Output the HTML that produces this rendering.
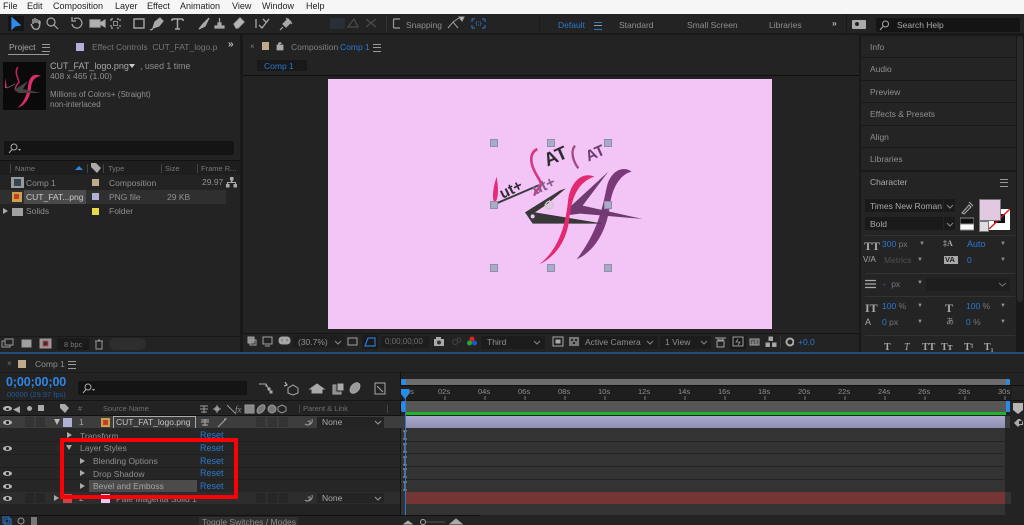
<!DOCTYPE html>
<html><head><meta charset="utf-8"><style>
html,body{margin:0;padding:0;background:#191919;}
#p{position:relative;width:1024px;height:525px;overflow:hidden;background:#191919;font-family:"Liberation Sans",sans-serif;font-size:8.5px;color:#8f8f8f;filter:blur(.35px);}
.b,.t,svg.a{position:absolute;}
.t{line-height:10px;white-space:nowrap;}
.bl{color:#2a78d0;}
.l{color:#a8a8a8;}
.m{position:absolute;width:8px;height:6px;border-top:1px solid #9a9a9a;border-bottom:1px solid #9a9a9a;}
.m:after{content:"";position:absolute;left:0;right:0;top:2px;height:1px;background:#9a9a9a;}
.h{position:absolute;width:6px;height:6px;background:#a9abcb;border:.5px solid #8f90a8;}
.e{position:absolute;width:9px;height:5px;background:#b5b5b5;border-radius:50%;}
.e:after{content:"";position:absolute;left:3px;top:1.5px;width:2.5px;height:2.5px;border-radius:50%;background:#222;}
.r{position:absolute;left:400px;width:604px;height:1px;background:#232323;}
</style></head><body><div id="p">
<div class="b" style="left:0;top:0;width:1024px;height:14px;background:#f6f6f6"></div>
<div class="t" style="left:3px;top:1px;color:#222;font-size:9px">File</div>
<div class="t" style="left:27px;top:1px;color:#222;font-size:9px">Edit</div>
<div class="t" style="left:53px;top:1px;color:#222;font-size:9px">Composition</div>
<div class="t" style="left:115px;top:1px;color:#222;font-size:9px">Layer</div>
<div class="t" style="left:147px;top:1px;color:#222;font-size:9px">Effect</div>
<div class="t" style="left:180px;top:1px;color:#222;font-size:9px">Animation</div>
<div class="t" style="left:232px;top:1px;color:#222;font-size:9px">View</div>
<div class="t" style="left:262px;top:1px;color:#222;font-size:9px">Window</div>
<div class="t" style="left:306px;top:1px;color:#222;font-size:9px">Help</div>

<div class="b" style="left:0;top:14px;width:1024px;height:19px;background:#232323"></div>
<div class="b" style="left:8px;top:16px;width:16px;height:15px;background:#161616"></div>
<svg class="a" style="left:0;top:14px" width="400" height="19" viewBox="0 0 400 19" fill="none" stroke="#a8a8a8" stroke-width="1.2">
<path d="M12 4V15L15 12L20 11Z" fill="#2d8ceb" stroke="#2d8ceb"/>
<path d="M31 10L33 14Q35 16 38 15Q40 13 40 7M33 10V5M35 9V4M37 9V5M39 10V6" stroke-width="1.4"/>
<circle cx="51" cy="8" r="4"/><path d="M54 11L58 15"/>
<path d="M74 5A5 5 0 1 1 72 10M72 3V7H76"/>
<path d="M90 6H100V13H90ZM100 9L105 6V13L100 10" fill="#b0b0b0"/>
<path d="M111 5H114M117 5H120M111 14H114M117 14H120M111 5V8M120 5V8M111 11V14M120 11V14" stroke-dasharray="2 1"/><rect x="113.500" y="7.500" width="4" height="4" stroke-width=".8"/>
<rect x="134" y="5" width="10" height="9" stroke-width="1.4"/>
<path d="M153 14L155 8L160 4L163 7L159 12Z" fill="#a8a8a8"/><path d="M153 15L150 16"/>
<path d="M172 5H183M177.500 5V15M175 15H180M172 5V7M183 5V7" stroke-width="1.5"/>
<path d="M199 15L203 10L209 4L205 12Z" fill="#a8a8a8"/>
<path d="M215 12H224V14H215ZM218 12V9H221V12M219.500 4V9" fill="#a8a8a8"/>
<path d="M234 10L240 4L244 8L238 14H236Z" fill="#b5b5b5"/>
<path d="M256 5V14M259 11L262 14L269 5M263 5L266 8" stroke-width="1.3"/>
<path d="M283 10L288 5L291 8L286 13ZM283 13L280 16M286 4L292 10" fill="#a8a8a8"/>
<path d="M330 4H345V15H330Z" fill="#2a2f36" stroke="none"/>
<path d="M348 13L354 5L358 13ZM366 5L376 13M376 5L366 13" stroke="#4c4c4c"/>
<rect x="393.500" y="5" width="9" height="9" rx="1" stroke="#9a9a9a"/>
</svg>
<div class="b" style="left:386px;top:16px;width:1px;height:15px;background:#353535"></div>
<div class="t" style="left:406px;top:20px">Snapping</div>
<svg class="a" style="left:445px;top:14px" width="45" height="19" fill="none" stroke="#a0a0a0"><path d="M3 14L8 8L13 14M8 8L14 4" /><path d="M14 3L19 3L17 7Z" fill="#bbb"/><path d="M27 5V8M27 5H30M40 5H37M40 5V8M27 14V11M27 14H30M40 14H37M40 14V11" stroke="#2a78d0"/><rect x="31" y="8" width="5" height="3" stroke="#2a78d0" stroke-dasharray="1 1"/></svg>
<div class="b" style="left:539px;top:15px;width:1px;height:17px;background:#1a1a1a"></div>
<div class="t bl" style="left:558px;top:20px">Default</div>
<div class="m" style="left:594px;top:22px;border-color:#2a78d0;background:none"></div>
<div class="t" style="left:619px;top:20px">Standard</div>
<div class="t" style="left:687px;top:20px">Small Screen</div>
<div class="t" style="left:769px;top:20px">Libraries</div>
<div class="t" style="left:832px;top:18px;color:#bbb;font-weight:bold">&raquo;</div>
<div class="b" style="left:846px;top:14px;width:1px;height:19px;background:#1a1a1a"></div>
<div class="b" style="left:852px;top:20px;width:14px;height:9px;background:#aaa;border-radius:1px"></div>
<div class="b" style="left:855px;top:22px;width:4px;height:4px;background:#222;border-radius:50%"></div>
<div class="b" style="left:876px;top:18px;width:144px;height:14px;background:#141414;border-radius:2px"></div>
<svg class="a" style="left:878px;top:18px" width="14" height="14" fill="none" stroke="#aaa"><circle cx="7.500" cy="6" r="3"/><path d="M5 8.500L2 12"/></svg>
<div class="t l" style="left:897px;top:20px">Search Help</div>

<!-- Project panel -->
<div class="b" style="left:0;top:35px;width:240px;height:317px;background:#232323"></div>
<div class="t l" style="left:9px;top:42px">Project</div>
<div class="m" style="left:42px;top:44px"></div>
<div class="b" style="left:8px;top:54px;width:41px;height:1px;background:#9a9a9a"></div>
<div class="b" style="left:76px;top:43px;width:8px;height:8px;background:#b0afd6"></div>
<div class="t" style="left:92px;top:42px;color:#777">Effect Controls&nbsp; CUT_FAT_logo.p</div>
<div class="t" style="left:228px;top:40px;color:#bbb;font-weight:bold;font-size:10px">&raquo;</div>
<div class="b" style="left:3px;top:62px;width:43px;height:48px;background:#0a0a0a"></div>
<svg class="a" style="left:3px;top:62px" width="43" height="48" viewBox="0 0 43 48"><path d="M38 14C30 10 26 16 25 24C24 34 20 42 14 46C22 44 27 36 28 26C29 18 32 15 38 14Z" fill="#e12a6b"/><path d="M11 28L25 19L20 27L38 31L16 31Z" fill="#444"/><path d="M15 5C11 10 15 16 16 20C14 22 13 24 12 27" stroke="#c22460" stroke-width="1.500" fill="none"/><path d="M2 16L2 26L4 26Z" fill="#e12a6b"/><path d="M4 26L12 22" stroke="#555"/></svg>
<div class="t l" style="left:50px;top:61px;font-size:9px">CUT_FAT_logo.png</div>
<div class="b" style="left:129px;top:64px;border:3.5px solid transparent;border-top:4px solid #ccc;border-bottom:0"></div>
<div class="t" style="left:140px;top:61px;font-size:8.800px">, used 1 time</div>
<div class="t" style="left:50px;top:71px">408 x 465 (1.00)</div>
<div class="t" style="left:50px;top:90px;font-size:8px">Millions of Colors+ (Straight)</div>
<div class="t" style="left:50px;top:100px;font-size:8px">non-interlaced</div>
<div class="b" style="left:4px;top:141px;width:230px;height:14px;background:#141414;border-radius:2px"></div>
<svg class="a" style="left:7px;top:141px" width="16" height="14" fill="none" stroke="#aaa"><circle cx="7" cy="6" r="3"/><path d="M5 8.500L2 12"/><path d="M11 8H14L12.500 10Z" fill="#aaa" stroke="none"/></svg>
<div class="b" style="left:0;top:160px;width:240px;height:1px;background:#111"></div>
<div class="b" style="left:0;top:161px;width:240px;height:14px;background:#1e1e1e"></div>
<div class="t" style="left:15px;top:164px;font-size:7.500px;color:#777">Name</div>
<div class="b" style="left:75px;top:166px;border:4.5px solid transparent;border-bottom:4px solid #2a8ae0;border-top:0"></div>
<svg class="a" style="left:90px;top:162px" width="12" height="12"><path d="M1 1H6L11 6L7 11L1 5Z" fill="#aaa"/></svg>
<div class="t" style="left:108px;top:164px;font-size:7.500px;color:#777">Type</div>
<div class="t" style="left:165px;top:164px;font-size:7.500px;color:#777">Size</div>
<div class="t" style="left:201px;top:164px;font-size:7.500px;color:#777">Frame R...</div>
<div class="b" style="left:10px;top:164px;width:1px;height:9px;background:#444"></div>
<div class="b" style="left:87px;top:164px;width:1px;height:9px;background:#444"></div>
<div class="b" style="left:103px;top:164px;width:1px;height:9px;background:#444"></div>
<div class="b" style="left:161px;top:164px;width:1px;height:9px;background:#444"></div>
<div class="b" style="left:197px;top:164px;width:1px;height:9px;background:#444"></div>
<div class="b" style="left:11px;top:177px;width:13px;height:11px;background:#999"></div>
<div class="b" style="left:14px;top:179px;width:7px;height:7px;background:#345"></div>
<div class="t" style="left:26px;top:178px">Comp 1</div>
<div class="b" style="left:92px;top:179px;width:7px;height:7px;background:#c0a98a"></div>
<div class="t" style="left:109px;top:178px">Composition</div>
<div class="t" style="left:202px;top:177px">29.97</div>
<svg class="a" style="left:226px;top:177px" width="11" height="11" fill="#aaa"><rect x="4" y="0" width="3.500" height="3.500"/><rect x="0" y="7" width="3.500" height="3.500"/><rect x="7.500" y="7" width="3.500" height="3.500"/><path d="M5 3H6.500V5H10V7H9V6H2V7H1V5H5Z"/></svg>
<div class="b" style="left:0;top:190px;width:226px;height:14px;background:#2f2f2f"></div>
<div class="b" style="left:24px;top:190px;width:62px;height:14px;background:#4a4a4a"></div>
<div class="b" style="left:12px;top:192px;width:10px;height:10px;background:#c9a24a"></div>
<div class="b" style="left:14px;top:194px;width:5px;height:5px;background:#c93a2a"></div>
<div class="t" style="left:26px;top:192px;color:#ccc">CUT_FAT...png</div>
<div class="b" style="left:92px;top:193px;width:7px;height:7px;background:#b0afd6"></div>
<div class="t" style="left:109px;top:192px">PNG file</div>
<div class="t" style="left:167px;top:192px">29 KB</div>
<div class="b" style="left:3px;top:208px;border:3px solid transparent;border-left:5px solid #aaa;border-right:0"></div>
<div class="b" style="left:12px;top:208px;width:11px;height:8px;background:#a0a0a0"></div>
<div class="t" style="left:26px;top:206px">Solids</div>
<div class="b" style="left:92px;top:208px;width:7px;height:7px;background:#e8d84a"></div>
<div class="t" style="left:109px;top:206px">Folder</div>
<div class="b" style="left:0;top:336px;width:240px;height:1px;background:#181818"></div>
<svg class="a" style="left:0;top:337px" width="110" height="14" fill="none" stroke="#9a9a9a"><rect x="2" y="4" width="8" height="6" /><rect x="5" y="2" width="8" height="6" fill="#232323"/><path d="M22 3H31V10H22Z" fill="#a0a0a0"/><rect x="40" y="2" width="11" height="9" fill="#999"/><rect x="43" y="4" width="5" height="5" fill="#333" stroke="#c44"/><path d="M95 4H103M96 4V12H102V4M98 3H100"/></svg>
<div class="b" style="left:57px;top:338px;width:32px;height:12px;background:#1a1a1a;border-radius:2px"></div>
<div class="t" style="left:64px;top:340px;font-size:7.500px;color:#777">8 bpc</div>
<div class="b" style="left:109px;top:338px;width:37px;height:12px;background:#2e2e2e;border-radius:6px"></div>

<!-- Composition panel -->
<div class="b" style="left:243px;top:35px;width:616px;height:317px;background:#232323"></div>
<div class="t" style="left:250px;top:42px;color:#777;font-size:8px">×</div>
<div class="b" style="left:262px;top:42px;width:7px;height:8px;background:#c0a98a"></div>
<svg class="a" style="left:276px;top:41px" width="9" height="10"><path d="M1 4H7V9H1ZM2.500 4V2.500Q4 .5 5.500 2.500" fill="#aaa" stroke="#aaa" stroke-width=".8"/></svg>
<div class="t" style="left:291px;top:42px;color:#808080">Composition</div>
<div class="t bl" style="left:340px;top:42px">Comp 1</div>
<div class="m" style="left:373px;top:44px"></div>
<div class="b" style="left:257px;top:60px;width:50px;height:11px;background:#191919"></div>
<div class="t bl" style="left:264px;top:60.500px">Comp 1</div>
<div class="b" style="left:243px;top:75px;width:616px;height:1px;background:#0e0e0e"></div>
<div class="b" style="left:328px;top:79px;width:444px;height:250px;background:#f3c5f7"></div>

<svg class="a" style="left:460px;top:125px" width="200" height="150" viewBox="0 0 600 450">
<g style="filter:blur(.8px)">
<path d="M110 155C98 190 95 225 104 232C116 225 116 190 110 155Z" fill="#e0307a"/>
<path d="M232 72C212 82 208 105 222 135C232 158 250 175 240 185C232 195 222 205 225 212" fill="none" stroke="#d63a7e" stroke-width="8"/>
<path d="M345 62C330 80 340 110 355 130" fill="none" stroke="#a34a80" stroke-width="7"/>
<path d="M110 235L238 180" stroke="#3c3c3c" stroke-width="6"/>
<text x="128" y="222" font-family="Liberation Sans,sans-serif" font-size="46" font-weight="bold" fill="#332c36" transform="rotate(-26 128 222)">ut+</text>
<text x="262" y="125" font-family="Liberation Sans,sans-serif" font-size="56" font-weight="bold" fill="#2f2a30" transform="rotate(-24 262 125)">AT</text>
<text x="385" y="110" font-family="Liberation Sans,sans-serif" font-size="46" font-weight="bold" fill="#6e3a72" transform="rotate(-24 385 110)">AT</text>
<text x="225" y="210" font-family="Liberation Sans,sans-serif" font-size="46" font-weight="bold" fill="#8a5a90" transform="rotate(-24 225 210)">ut+</text>
<path d="M515 140C490 122 460 135 445 170C432 205 430 300 350 403C402 380 440 320 450 240C456 190 480 148 515 140Z" fill="#7a3a78"/>
<path d="M325 250L445 140L368 242L548 282L360 266L328 270Z" fill="#6f3a70"/>
<path d="M195 262L300 196L318 190L258 240L225 262L430 296L218 296Z" fill="#383838"/>
<circle cx="218" cy="274" r="6" fill="#f3c5f7"/>
<path d="M403 155C370 140 335 165 325 220C318 292 300 370 238 418C292 392 322 340 328 280C335 220 352 172 403 155Z" fill="#e3296f"/>
</g>
<circle cx="268" cy="240" r="11" fill="none" stroke="#c9c9c9" stroke-width="4"/>
<path d="M252 240H284M268 224V256" stroke="#c9c9c9" stroke-width="2"/>
</svg>
<div class="h" style="left:490px;top:139px"></div><div class="h" style="left:547px;top:139px"></div><div class="h" style="left:604px;top:139px"></div>
<div class="h" style="left:490px;top:201px"></div><div class="h" style="left:604px;top:201px"></div>
<div class="h" style="left:490px;top:264px"></div><div class="h" style="left:547px;top:264px"></div><div class="h" style="left:604px;top:264px"></div>

<!-- viewer toolbar -->
<div class="b" style="left:243px;top:333px;width:616px;height:1px;background:#141414"></div>
<div class="b" style="left:293px;top:335px;width:52px;height:13px;background:#1e1e1e"></div>
<div class="t" style="left:298px;top:337px">(30.7%)</div>
<svg class="a" style="left:244px;top:335px" width="115" height="14" fill="none" stroke="#a0a0a0"><rect x="4" y="2" width="6" height="6" fill="#888"/><rect x="6" y="5" width="6" height="5"/><rect x="19" y="2" width="9" height="7"/><path d="M21 11H26"/><rect x="35" y="2" width="11" height="7" rx="3" fill="#aaa"/><circle cx="38" cy="5" r="1" fill="#222"/><circle cx="43" cy="5" r="1" fill="#222"/><path d="M91 6L94 9L97 6" stroke="#888"/><rect x="104" y="3" width="9" height="7"/></svg>
<div class="b" style="left:362px;top:335px;width:16px;height:14px;background:#1a1a1a"></div>
<svg class="a" style="left:362px;top:335px" width="16" height="14" fill="none" stroke="#2a78d0" stroke-width="1.2"><path d="M3 11L6 3H13V11Z"/></svg>
<div class="b" style="left:381px;top:336px;width:48px;height:12px;background:#1d1d1d"></div>
<div class="t" style="left:385px;top:337px;font-size:8px;color:#6f6f6f">0;00;00;00</div>
<svg class="a" style="left:432px;top:335px" width="50" height="14"><rect x="2" y="4" width="10" height="7" fill="#aaa"/><rect x="4" y="2" width="5" height="3" fill="#aaa"/><circle cx="7" cy="7.500" r="2" fill="#333"/><circle cx="23" cy="7" r="2.500" fill="none" stroke="#444"/><circle cx="27" cy="5" r="2" fill="none" stroke="#444"/><circle cx="40" cy="4" r="2.500" fill="#d22"/><circle cx="37.500" cy="8" r="2.500" fill="#2a3"/><circle cx="42.500" cy="8" r="2.500" fill="#25c"/></svg>
<div class="b" style="left:481px;top:336px;width:64px;height:13px;background:#1c1c1c"></div>
<div class="t" style="left:487px;top:337px">Third</div>
<svg class="a" style="left:533px;top:340px" width="8" height="5" fill="none" stroke="#888"><path d="M1 1L4 4L7 1"/></svg>
<svg class="a" style="left:552px;top:335px" width="28" height="14"><rect x="1" y="2" width="10" height="9" fill="none" stroke="#aaa"/><rect x="3.500" y="4.500" width="5" height="4" fill="#aaa"/><rect x="17" y="2" width="10" height="9" fill="#777"/><rect x="19" y="4" width="2" height="2" fill="#222"/><rect x="23" y="4" width="2" height="2" fill="#222"/><rect x="21" y="7" width="2" height="2" fill="#222"/></svg>
<div class="b" style="left:580px;top:336px;width:78px;height:13px;background:#1c1c1c"></div>
<div class="t" style="left:585px;top:337px">Active Camera</div>
<svg class="a" style="left:646px;top:340px" width="8" height="5" fill="none" stroke="#888"><path d="M1 1L4 4L7 1"/></svg>
<div class="b" style="left:660px;top:336px;width:51px;height:13px;background:#1c1c1c"></div>
<div class="t" style="left:665px;top:337px">1 View</div>
<svg class="a" style="left:700px;top:340px" width="8" height="5" fill="none" stroke="#888"><path d="M1 1L4 4L7 1"/></svg>
<div class="b" style="left:730px;top:336px;width:16px;height:13px;background:#191919"></div>
<svg class="a" style="left:714px;top:335px" width="80" height="14" fill="none" stroke="#a0a0a0"><path d="M1 3H12M4 3V5H9V3M3 6H10V12H3Z"/><rect x="19" y="2" width="10" height="9"/><path d="M24 4L22 7H26L24 10" stroke-width=".8"/><path d="M36 10V4H45V10ZM39 10V6M42 10V5" fill="#555"/><rect x="55" y="2" width="3.500" height="3.500" fill="#aaa"/><rect x="52" y="8" width="3.500" height="3.500" fill="#aaa"/><rect x="58.500" y="8" width="3.500" height="3.500" fill="#aaa"/><circle cx="76" cy="7" r="3.500" stroke="#aaa" stroke-width="2"/></svg>
<div class="t bl" style="left:798px;top:337px">+0.0</div>
<div class="b" style="left:780px;top:336px;width:1px;height:12px;background:#383838"></div>

<!-- Right panels -->
<div class="b" style="left:861px;top:36px;width:155px;height:316px;background:#242424"></div>
<div class="b" style="left:1017px;top:36px;width:6px;height:266px;background:#2a2a2a;border-radius:3px"></div>
<div class="t" style="left:870px;top:42px">Info</div>
<div class="t" style="left:870px;top:64px">Audio</div>
<div class="t" style="left:870px;top:87px">Preview</div>
<div class="t" style="left:870px;top:109px">Effects &amp; Presets</div>
<div class="t" style="left:870px;top:132px">Align</div>
<div class="t" style="left:870px;top:154px">Libraries</div>
<div class="b" style="left:861px;top:57px;width:155px;height:1px;background:#191919"></div>
<div class="b" style="left:861px;top:80px;width:155px;height:1px;background:#191919"></div>
<div class="b" style="left:861px;top:102px;width:155px;height:1px;background:#191919"></div>
<div class="b" style="left:861px;top:125px;width:155px;height:1px;background:#191919"></div>
<div class="b" style="left:861px;top:147px;width:155px;height:1px;background:#191919"></div>
<div class="b" style="left:861px;top:170px;width:155px;height:2px;background:#191919"></div>
<div class="t" style="left:870px;top:177px;color:#aaa">Character</div>
<div class="m" style="left:1000px;top:179px"></div>
<div class="b" style="left:865px;top:199px;width:78px;height:13px;background:#1a1a1a"></div>
<div class="b" style="left:944px;top:199px;width:11px;height:13px;background:#1a1a1a"></div>
<div class="t l" style="left:870px;top:201px">Times New Roman</div>
<div class="b" style="left:865px;top:217px;width:78px;height:13px;background:#1a1a1a"></div>
<div class="b" style="left:944px;top:217px;width:11px;height:13px;background:#1a1a1a"></div>
<div class="t l" style="left:870px;top:219px">Bold</div>
<svg class="a" style="left:945px;top:203px" width="10" height="26" fill="none" stroke="#888"><path d="M2 2L5 5L8 2M2 20L5 23L8 20"/></svg>
<svg class="a" style="left:960px;top:199px" width="14" height="32" fill="none" stroke="#aaa"><path d="M2 14L9 6L11 8L4 15ZM9 3L13 7" fill="#333"/><rect x="0" y="19" width="14" height="12" fill="#fff" stroke="#888"/><rect x="0" y="19" width="14" height="6" fill="#111" stroke="#888"/></svg>
<div class="b" style="left:989px;top:209px;width:21px;height:21px;background:#fff"></div>
<div class="b" style="left:994px;top:214px;width:11px;height:9px;background:#111"></div>
<svg class="a" style="left:979px;top:199px" width="32" height="32"><path d="M10 30L31 10" stroke="#e01010" stroke-width="1.300"/></svg>
<div class="b" style="left:979px;top:199px;width:20px;height:20px;background:#e2c9e2;border:1px solid #777"></div>
<div class="b" style="left:979px;top:221px;width:8px;height:9px;background:#ddd;border:.5px solid #777"></div>
<div class="b" style="left:865px;top:235px;width:150px;height:1px;background:#333"></div>
<div class="b" style="left:865px;top:273px;width:150px;height:1px;background:#333"></div>
<div class="b" style="left:865px;top:296px;width:150px;height:1px;background:#333"></div>
<div class="b" style="left:865px;top:335px;width:150px;height:1px;background:#333"></div>
<div class="t l" style="left:864px;top:239px;font:bold 12px 'Liberation Serif',serif">TT</div>
<div class="t bl" style="left:882px;top:239px">300 <span style="color:#777">px</span></div>
<div class="t" style="left:919px;top:239px;font-size:6px">▼</div>
<div class="t l" style="left:863px;top:255px;font-size:8px">V/A</div>
<div class="t" style="left:884px;top:255px;color:#4e4e4e">Metrics</div>
<div class="t" style="left:917px;top:255px;font-size:6px">▼</div>
<div class="t l" style="left:943px;top:239px;font:bold 8px 'Liberation Serif',serif">‡A</div>
<div class="t bl" style="left:967px;top:239px;font-size:9px">Auto</div>
<div class="t" style="left:1000px;top:239px;font-size:6px">▼</div>
<div class="b" style="left:944px;top:256px;width:14px;height:8px;background:#aaa"></div>
<div class="t" style="left:945px;top:255px;color:#222;font-size:7.500px;font-weight:bold">VA</div>
<div class="t bl" style="left:967px;top:255px">0</div>
<div class="t" style="left:1000px;top:255px;font-size:6px">▼</div>
<svg class="a" style="left:865px;top:279px" width="12" height="11" fill="none" stroke="#aaa" stroke-width="1.300"><path d="M0 1.500H11M0 5H11M0 8.500H11"/></svg>
<div class="t bl" style="left:883px;top:279px">- <span style="color:#777;margin-left:3px">px</span></div>
<div class="t" style="left:917px;top:278px;font-size:6px">▼</div>
<div class="b" style="left:926px;top:278px;width:84px;height:13px;background:#1e1e1e"></div>
<svg class="a" style="left:998px;top:282px" width="10" height="6" fill="none" stroke="#777"><path d="M1 1L4.500 4L8 1"/></svg>
<div class="t l" style="left:865px;top:301px;font:bold 12px 'Liberation Serif',serif">IT</div>
<div class="t bl" style="left:882px;top:301px">100 <span style="color:#777">%</span></div>
<div class="t" style="left:917px;top:301px;font-size:6px">▼</div>
<div class="t l" style="left:945px;top:301px;font:bold 12px 'Liberation Serif',serif">T</div>
<div class="t bl" style="left:966px;top:301px">100 <span style="color:#777">%</span></div>
<div class="t" style="left:1000px;top:301px;font-size:6px">▼</div>
<div class="t l" style="left:865px;top:317px;font-size:9px">A</div>
<div class="t bl" style="left:882px;top:317px">0 <span style="color:#777">px</span></div>
<div class="t" style="left:917px;top:317px;font-size:6px">▼</div>
<div class="t" style="left:946px;top:317px;color:#999;font-size:8px;font-family:'Liberation Sans','Noto Sans CJK JP',sans-serif">あ</div>
<div class="t bl" style="left:966px;top:317px">0 <span style="color:#777">%</span></div>
<div class="t" style="left:1000px;top:317px;font-size:6px">▼</div>
<div class="t l" style="left:884px;top:342px;font:bold 10px 'Liberation Serif',serif">T</div>
<div class="t l" style="left:904px;top:342px;font:italic 10px 'Liberation Serif',serif">T</div>
<div class="t l" style="left:922px;top:342px;font:bold 10px 'Liberation Serif',serif">TT</div>
<div class="t l" style="left:941px;top:342px;font:bold 10px 'Liberation Serif',serif">Tт</div>
<div class="t l" style="left:964px;top:342px;font:bold 10px 'Liberation Serif',serif">T¹</div>
<div class="t l" style="left:984px;top:342px;font:bold 10px 'Liberation Serif',serif">T₁</div>

<!-- blue divider -->
<div class="b" style="left:0;top:352px;width:1024px;height:2px;background:#1e4d80"></div>

<!-- Timeline -->
<div class="b" style="left:0;top:354px;width:1024px;height:171px;background:#232323"></div>
<div class="t" style="left:7px;top:359px;color:#777;font-size:8px">×</div>
<div class="b" style="left:18px;top:360px;width:8px;height:8px;background:#c0a98a"></div>
<div class="t" style="left:35px;top:359px">Comp 1</div>
<div class="m" style="left:68px;top:361px"></div>
<div class="b" style="left:0;top:372px;width:1024px;height:1px;background:#1a1a1a"></div>
<div class="t" style="left:6px;top:377px;color:#2d86e6;font-size:12.500px;font-weight:bold;letter-spacing:-.1px">0;00;00;00</div>
<div class="t" style="left:7px;top:390px;color:#1f5a9c;font-size:7.500px">00000 (29.97 fps)</div>
<div class="b" style="left:78px;top:381px;width:169px;height:14px;background:#141414"></div>
<svg class="a" style="left:81px;top:381px" width="16" height="14" fill="none" stroke="#aaa"><circle cx="7" cy="6" r="3"/><path d="M5 8.500L2 12"/><path d="M11 8H14L12.500 10Z" fill="#aaa" stroke="none"/></svg>
<svg class="a" style="left:258px;top:379px" width="132" height="18" fill="none" stroke="#a8a8a8"><path d="M1 5H8L11 10M8 5V8" /><rect x="10" y="9" width="2" height="2" fill="#aaa"/><rect x="12" y="12" width="2" height="2" fill="#aaa"/><path d="M27 3L29 6L26 7" stroke="#ccc"/><path d="M30 9L35 6L40 9V14L35 16L30 14Z"/><path d="M52 10L59 5L66 10H52ZM54 10V14H64V10" fill="#aaa"/><rect x="75" y="6" width="8" height="9" fill="#888"/><rect x="79" y="4" width="7" height="8" fill="#aaa" stroke="#232323"/><ellipse cx="97" cy="9" rx="4" ry="6" transform="rotate(40 97 9)" fill="#999"/><path d="M117 4H127V15H117ZM119 7L125 13" /></svg>
<div class="b" style="left:0;top:400px;width:400px;height:1px;background:#141414"></div>
<div class="e" style="left:3px;top:406px"></div>
<div class="t" style="left:13px;top:404px;color:#aaa;font-size:9px">◀</div>
<div class="b" style="left:27px;top:406px;width:5px;height:5px;background:#aaa;border-radius:50%"></div>
<div class="b" style="left:38px;top:405px;width:6px;height:6px;background:#aaa"></div>
<svg class="a" style="left:59px;top:403px" width="11" height="11"><path d="M1 1H6L10 5L6 10L1 5Z" fill="#aaa"/></svg>
<div class="t" style="left:78px;top:404px;font-size:7.500px;color:#6f6f6f">#</div>
<div class="t" style="left:103px;top:404px;font-size:7.500px;color:#6f6f6f">Source Name</div>
<svg class="a" style="left:198px;top:403px" width="92" height="12" fill="none" stroke="#999"><path d="M2 3H10M2 6H10M6 3V10M3 9H9"/><circle cx="19" cy="6" r="2" fill="#999"/><path d="M19 2V10M15 6H23"/><path d="M29 2L37 10"/><text x="37" y="9.500" font-family="Liberation Serif,serif" font-style="italic" font-size="9" fill="#999" stroke="none">fx</text><rect x="47" y="2" width="9" height="8" fill="#888"/><ellipse cx="63" cy="6" rx="3" ry="5" transform="rotate(40 63 6)" fill="#777"/><circle cx="74" cy="6" r="4" fill="#777"/><path d="M84 2L88 4V8L84 10L80 8V4Z"/></svg>
<div class="t" style="left:303px;top:404px;font-size:7.500px;color:#6f6f6f">Parent &amp; Link</div>
<div class="b" style="left:299px;top:405px;width:1px;height:8px;background:#444"></div>
<div class="b" style="left:387px;top:405px;width:1px;height:8px;background:#444"></div>
<div class="b" style="left:0;top:415px;width:400px;height:1px;background:#111"></div>

<!-- Layer rows left -->
<div class="b" style="left:0;top:416px;width:400px;height:12px;background:#3d3d3d"></div>
<div class="e" style="left:3px;top:419.500px"></div>
<div class="b" style="left:25px;top:417px;width:9px;height:10px;background:#333"></div>
<div class="b" style="left:36px;top:417px;width:9px;height:10px;background:#333"></div>
<div class="b" style="left:54px;top:419px;border:3.500px solid transparent;border-top:6px solid #bbb;border-bottom:0"></div>
<div class="b" style="left:63px;top:418px;width:9px;height:9px;background:#b0afd6"></div>
<div class="t l" style="left:79px;top:417px">1</div>
<div class="b" style="left:101px;top:418px;width:9px;height:9px;background:#c9a24a"></div>
<div class="b" style="left:103px;top:420px;width:5px;height:5px;background:#c93a2a"></div>
<div class="b" style="left:113px;top:416px;width:81px;height:11px;border:1px solid #aaa;background:#3a3a3a"></div>
<div class="t" style="left:116px;top:417px;color:#c4c4c4">CUT_FAT_logo.png</div>
<svg class="a" style="left:199px;top:416px" width="30" height="12" fill="none" stroke="#aaa"><path d="M2 4H10M2 6H10M6 3V10M3 9H9"/><path d="M25 3L27 3L19 11"/></svg>
<div class="b" style="left:256px;top:417px;width:9px;height:10px;background:#333"></div>
<div class="b" style="left:268px;top:417px;width:9px;height:10px;background:#333"></div>
<div class="b" style="left:279px;top:417px;width:9px;height:10px;background:#333"></div>
<svg class="a" style="left:302px;top:416px" width="12" height="12" fill="none" stroke="#999"><path d="M6 6A1.500 1.500 0 0 1 8 5A3 3 0 0 1 3 8A4.500 4.500 0 0 0 10 3"/></svg>
<div class="b" style="left:317px;top:416.500px;width:67px;height:11px;background:#242424"></div>
<div class="t l" style="left:322px;top:417px;font-size:8.500px">None</div>
<svg class="a" style="left:374px;top:420px" width="8" height="5" fill="none" stroke="#999"><path d="M1 1L4 4L7 1"/></svg>

<div class="b" style="left:0;top:428px;width:400px;height:64px;background:#262626"></div>
<div class="b" style="left:0;top:441px;width:400px;height:1px;background:#1f1f1f"></div>
<div class="b" style="left:0;top:454px;width:400px;height:1px;background:#1f1f1f"></div>
<div class="b" style="left:0;top:467px;width:400px;height:1px;background:#1f1f1f"></div>
<div class="b" style="left:0;top:479px;width:400px;height:1px;background:#1f1f1f"></div>
<div class="b" style="left:89px;top:480px;width:108px;height:12px;background:#4b4b4b"></div>

<div class="b" style="left:67px;top:432px;border:3px solid transparent;border-left:5px solid #aaa;border-right:0"></div>
<div class="t" style="left:80px;top:431px">Transform</div>
<div class="t bl" style="left:200px;top:430px;font-size:9px">Reset</div>
<div class="e" style="left:3px;top:445.500px"></div>
<div class="b" style="left:66px;top:445px;border:3px solid transparent;border-top:5px solid #aaa;border-bottom:0"></div>
<div class="t" style="left:80px;top:443px">Layer Styles</div>
<div class="t bl" style="left:200px;top:443px;font-size:9px">Reset</div>
<div class="b" style="left:80px;top:458px;border:3px solid transparent;border-left:5px solid #aaa;border-right:0"></div>
<div class="t" style="left:93px;top:456px">Blending Options</div>
<div class="t bl" style="left:200px;top:456px;font-size:9px">Reset</div>
<div class="e" style="left:3px;top:470.500px"></div>
<div class="b" style="left:80px;top:470px;border:3px solid transparent;border-left:5px solid #aaa;border-right:0"></div>
<div class="t" style="left:93px;top:469px">Drop Shadow</div>
<div class="t bl" style="left:200px;top:468px;font-size:9px">Reset</div>
<div class="e" style="left:3px;top:483.500px"></div>
<div class="b" style="left:80px;top:483px;border:3px solid transparent;border-left:5px solid #aaa;border-right:0"></div>
<div class="t" style="left:93px;top:481px;color:#a5a5a5">Bevel and Emboss</div>
<div class="t bl" style="left:200px;top:481px;font-size:9px">Reset</div>

<div class="b" style="left:0;top:492px;width:400px;height:12px;background:#2d2d2d"></div>
<div class="e" style="left:3px;top:495.500px"></div>
<div class="b" style="left:25px;top:493px;width:9px;height:10px;background:#262626"></div>
<div class="b" style="left:36px;top:493px;width:9px;height:10px;background:#262626"></div>
<div class="b" style="left:54px;top:495px;border:3px solid transparent;border-left:5px solid #aaa;border-right:0"></div>
<div class="b" style="left:63px;top:494px;width:9px;height:9px;background:#c44"></div>
<div class="t l" style="left:79px;top:493px">2</div>
<div class="b" style="left:101px;top:494px;width:9px;height:9px;background:#f3c5f7"></div>
<div class="t" style="left:116px;top:494px">Pale Magenta Solid 1</div>
<svg class="a" style="left:302px;top:492px" width="12" height="12" fill="none" stroke="#999"><path d="M6 6A1.500 1.500 0 0 1 8 5A3 3 0 0 1 3 8A4.500 4.500 0 0 0 10 3"/></svg>
<div class="b" style="left:317px;top:493px;width:67px;height:10px;background:#242424"></div>
<div class="t l" style="left:322px;top:493px;font-size:8.500px">None</div>
<svg class="a" style="left:374px;top:496px" width="8" height="5" fill="none" stroke="#999"><path d="M1 1L4 4L7 1"/></svg>
<div class="b" style="left:256px;top:493px;width:9px;height:10px;background:#262626"></div>
<div class="b" style="left:268px;top:493px;width:9px;height:10px;background:#262626"></div>
<div class="b" style="left:279px;top:493px;width:9px;height:10px;background:#262626"></div>

<!-- Red highlight -->
<div class="b" style="left:60px;top:438px;width:170px;height:53px;border:4px solid #fb0007"></div>

<!-- Timeline bottom -->
<div class="b" style="left:0;top:515px;width:480px;height:1px;background:#111"></div>
<svg class="a" style="left:0;top:516px" width="40" height="9" fill="none" stroke="#2a78d0"><rect x="3" y="1" width="6" height="6"/><rect x="5" y="3" width="6" height="6"/><circle cx="21" cy="5" r="3" stroke="#999"/><rect x="31" y="1" width="6" height="8" fill="#777" stroke="none"/></svg>
<div class="b" style="left:199px;top:517px;width:99px;height:8px;background:#2f2f2f"></div>
<div class="t" style="left:202px;top:517px;font-size:8.500px">Toggle Switches / Modes</div>
<svg class="a" style="left:400px;top:516px" width="80" height="9" fill="none" stroke="#aaa"><path d="M4 8L8 5L12 8Z" fill="#aaa"/><circle cx="23" cy="6" r="2.500"/><path d="M26 6H45" stroke="#555"/><path d="M50 8L56 3L62 8Z" fill="#aaa"/></svg>

<!-- Timeline right -->
<div class="b" style="left:400px;top:372px;width:1px;height:143px;background:#111"></div>
<div class="b" style="left:401px;top:379px;width:609px;height:6px;background:#6c6c6c"></div>
<div class="b" style="left:401px;top:379px;width:5px;height:6px;background:#2a8ae8;border-radius:3px 0 0 3px"></div>
<div class="b" style="left:1006px;top:379px;width:4px;height:6px;background:#2a8ae8;border-radius:0 3px 3px 0"></div>
<div class="b" style="left:400px;top:385px;width:624px;height:1px;background:#111"></div>
<div class="b" style="left:400px;top:386px;width:612px;height:14px;background:#1e1e1e"></div>
<div class="t" style="left:406px;top:387px;font-size:7.500px;color:#909090">0s</div>
<div class="t" style="left:438px;top:387px;font-size:7.500px;color:#909090">02s</div>
<div class="t" style="left:478px;top:387px;font-size:7.500px;color:#909090">04s</div>
<div class="t" style="left:518px;top:387px;font-size:7.500px;color:#909090">06s</div>
<div class="t" style="left:558px;top:387px;font-size:7.500px;color:#909090">08s</div>
<div class="t" style="left:598px;top:387px;font-size:7.500px;color:#909090">10s</div>
<div class="t" style="left:638px;top:387px;font-size:7.500px;color:#909090">12s</div>
<div class="t" style="left:678px;top:387px;font-size:7.500px;color:#909090">14s</div>
<div class="t" style="left:718px;top:387px;font-size:7.500px;color:#909090">16s</div>
<div class="t" style="left:758px;top:387px;font-size:7.500px;color:#909090">18s</div>
<div class="t" style="left:798px;top:387px;font-size:7.500px;color:#909090">20s</div>
<div class="t" style="left:838px;top:387px;font-size:7.500px;color:#909090">22s</div>
<div class="t" style="left:878px;top:387px;font-size:7.500px;color:#909090">24s</div>
<div class="t" style="left:918px;top:387px;font-size:7.500px;color:#909090">26s</div>
<div class="t" style="left:958px;top:387px;font-size:7.500px;color:#909090">28s</div>
<div class="t" style="left:998px;top:387px;font-size:7.500px;color:#909090">30s</div>
<svg class="a" style="left:400px;top:396px" width="620" height="4" stroke="#777"><path d="M45 0V4M85 0V4M125 0V4M165 0V4M205 0V4M245 0V4M285 0V4M325 0V4M365 0V4M405 0V4M445 0V4M485 0V4M525 0V4M565 0V4M605 0V4"/></svg>
<div class="b" style="left:400px;top:400px;width:624px;height:1px;background:#111"></div>
<div class="b" style="left:401px;top:401px;width:609px;height:11px;background:#565656"></div>
<div class="b" style="left:401px;top:401px;width:4px;height:11px;background:#2a8ae8;border-radius:3px 0 0 3px"></div>
<div class="b" style="left:1006px;top:401px;width:4px;height:11px;background:#2a8ae8"></div>
<svg class="a" style="left:1013px;top:403px" width="10" height="11"><path d="M0 0H10V7L5 11L0 7Z" fill="#b5b5b5"/></svg>
<div class="b" style="left:405px;top:412px;width:601px;height:3px;background:#1eb52d"></div>
<div class="b" style="left:400px;top:416px;width:5px;height:12px;background:#3d3d3d"></div>
<div class="b" style="left:405px;top:416px;width:600px;height:12px;background:linear-gradient(#aaa8cc,#908eb0)"></div>
<div class="b" style="left:1005px;top:416px;width:5px;height:12px;background:#3d3d3d"></div>
<div class="b" style="left:401px;top:428px;width:604px;height:87px;background:#333"></div>
<div class="r" style="top:441px"></div><div class="r" style="top:453px"></div><div class="r" style="top:466px"></div><div class="r" style="top:479px"></div>
<div class="b" style="left:405px;top:492px;width:600px;height:12px;background:#763535"></div>
<div class="b" style="left:1005px;top:492px;width:6px;height:12px;background:#333"></div>
<svg class="a" style="left:1014px;top:417px" width="10" height="11"><path d="M0 6L4 2H6L9 5V8H6L4 10Z" fill="#aaa"/><rect x="5" y="4" width="3" height="3" fill="#222"/></svg>
<svg class="a" style="left:401px;top:429px" width="10" height="64" stroke="#a5a5a5" fill="none"><path d="M2 2H6M4 2V10M2 10H6M2 15H6M4 15V23M2 23H6M2 28H6M4 28V36M2 36H6M2 40H6M4 40V48M2 48H6M2 53H6M4 53V61M2 61H6"/></svg>
<div class="b" style="left:405px;top:391px;width:1px;height:124px;background:#2a78d0"></div>
<svg class="a" style="left:401px;top:388px" width="9" height="12"><path d="M0 1H8V6L4 11L0 6Z" fill="#2a8ae8"/></svg>
</div></body></html>
